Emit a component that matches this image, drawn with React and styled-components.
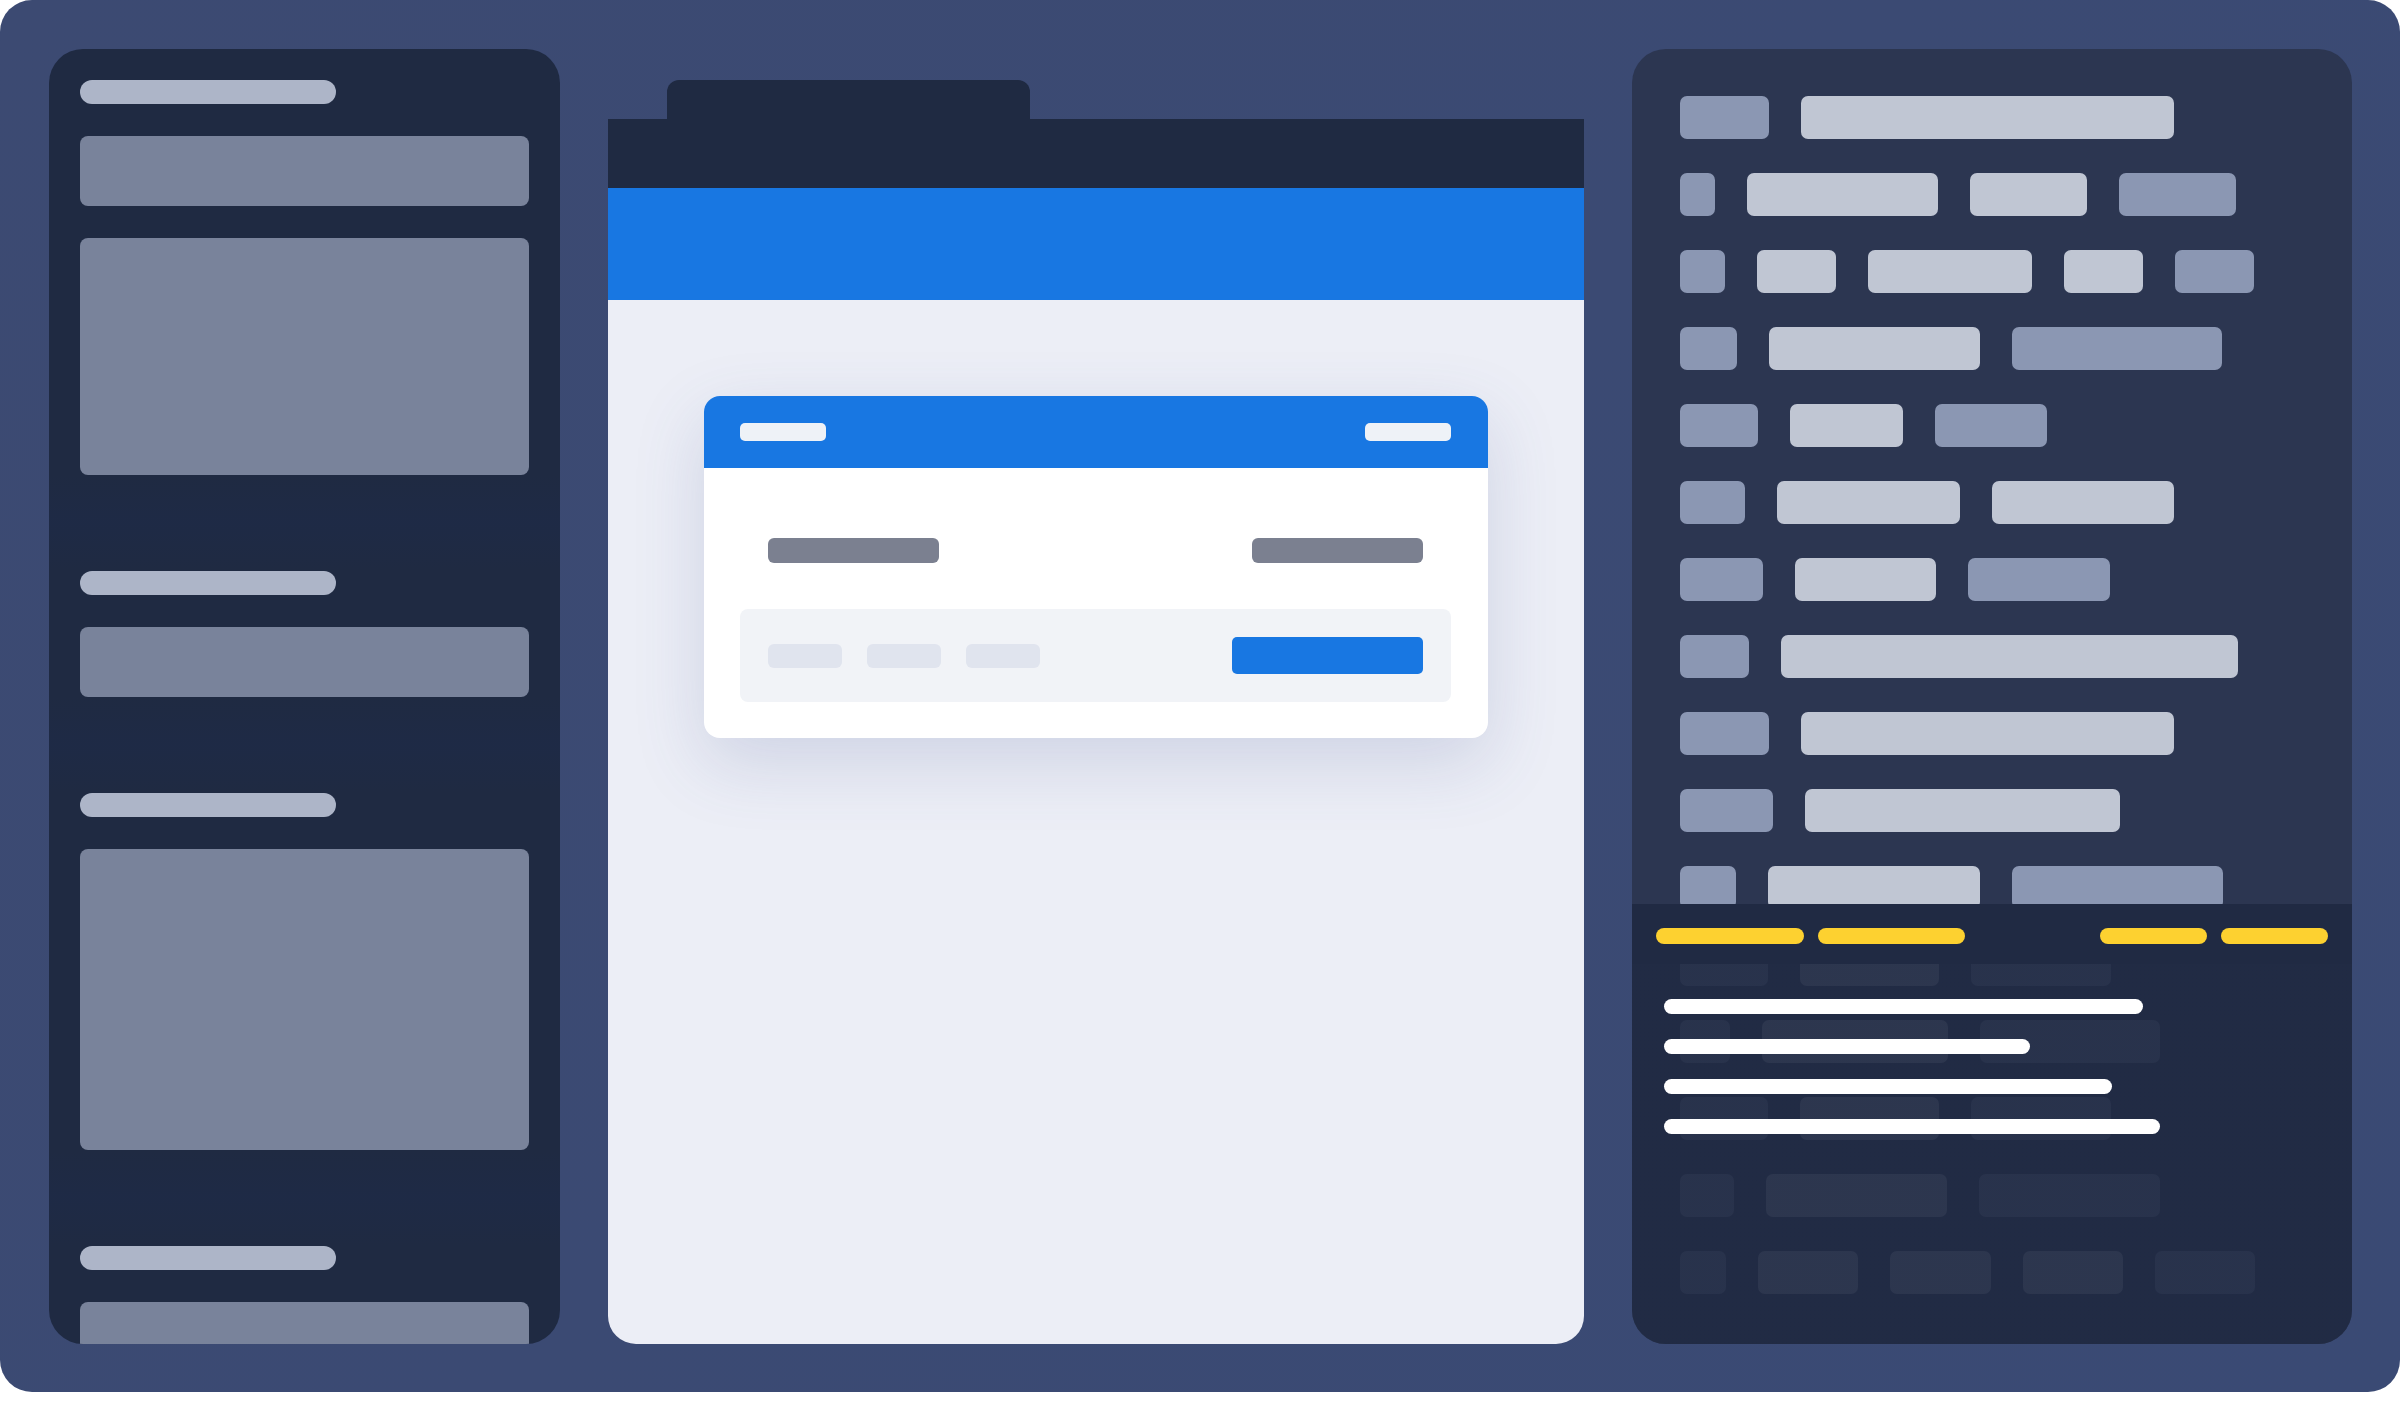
import React from "react";
import styled, { createGlobalStyle } from "styled-components";

const GlobalStyle = createGlobalStyle`
  html, body {
    margin: 0;
    padding: 0;
    background: #ffffff;
    font-family: "Inter", "Liberation Sans", sans-serif;
  }
`;

const codeRows = [
  [[89, "d"], [373, "l"]],
  [[35, "d"], [191, "l"], [117, "l"], [117, "d"]],
  [[45, "d"], [79, "l"], [164, "l"], [79, "l"], [79, "d"]],
  [[57, "d"], [211, "l"], [210, "d"]],
  [[78, "d"], [113, "l"], [112, "d"]],
  [[65, "d"], [183, "l"], [182, "l"]],
  [[83, "d"], [141, "l"], [142, "d"]],
  [[69, "d"], [457, "l"]],
  [[89, "d"], [373, "l"]],
  [[93, "d"], [315, "l"]],
  [[56, "d"], [212, "l"], [211, "d"]],
  [[88, "d"], [139, "l"], [140, "d"]],
  [[50, "d"], [186, "l"], [180, "d"]],
  [[88, "d"], [139, "l"], [140, "d"]],
  [[54, "d"], [181, "l"], [181, "d"]],
  [[46, "d"], [100, "l"], [101, "l"], [100, "l"], [100, "d"]],
];

const sidebarSections = [[70, 237], [70], [301], [120]];

const logLines = [479, 366, 448, 496];

const App = () => {
  return (
    <>
      <GlobalStyle />
      <Frame>
        <Sidebar>
          {sidebarSections.map((blocks, i) => (
            <React.Fragment key={i}>
              {i > 0 && <Band />}
              <Section>
                <Label />
                {blocks.map((h, j) => (
                  <Block key={j} $h={h} />
                ))}
              </Section>
            </React.Fragment>
          ))}
        </Sidebar>

        <Center>
          <Tab />
          <Window>
            <TitleBar />
            <Hero />
            <Canvas>
              <Dialog>
                <DialogHead>
                  <HeadPill />
                  <HeadPill />
                </DialogHead>
                <DialogBody>
                  <FieldRow>
                    <Field />
                    <Field />
                  </FieldRow>
                  <Footer>
                    <Chips>
                      <Chip />
                      <Chip />
                      <Chip />
                    </Chips>
                    <PrimaryButton />
                  </Footer>
                </DialogBody>
              </Dialog>
            </Canvas>
          </Window>
        </Center>

        <Editor>
          <Code>
            {codeRows.map((row, i) => (
              <CodeRow key={i}>
                {row.map(([w, tone], j) => (
                  <Token key={j} $w={w} $tone={tone} />
                ))}
              </CodeRow>
            ))}
          </Code>
          <Terminal>
            <TermHead>
              <PillGroup>
                <Pill $w={148} />
                <Pill $w={147} />
              </PillGroup>
              <PillGroup>
                <Pill $w={107} />
                <Pill $w={107} />
              </PillGroup>
            </TermHead>
            <Lines>
              {logLines.map((w, i) => (
                <Line key={i} $w={w} />
              ))}
            </Lines>
          </Terminal>
        </Editor>
      </Frame>
    </>
  );
};

export default App;

const Frame = styled.div`
  width: 2400px;
  height: 1392px;
  box-sizing: border-box;
  padding: 49px 48px 48px 49px;
  background: linear-gradient(135deg, #3c4a72 0%, #3a4a74 100%);
  border-radius: 32px;
  display: grid;
  grid-template-columns: 511px 976px 720px;
  column-gap: 48px;
`;

const Sidebar = styled.div`
  background: #1f2a42;
  border-radius: 34px;
  overflow: hidden;
  padding: 31px;
  display: flex;
  flex-direction: column;
`;

const Section = styled.div`
  display: flex;
  flex-direction: column;
  gap: 32px;
  flex-shrink: 0;
`;

const Band = styled.div`
  height: 96px;
  flex-shrink: 0;
  margin: 0 -31px;
  background: linear-gradient(
    180deg,
    rgba(28, 42, 78, 0) 0%,
    rgba(28, 42, 78, 0.3) 50%,
    rgba(28, 42, 78, 0) 100%
  );
`;

const Label = styled.div`
  width: 256px;
  height: 24px;
  border-radius: 12px;
  background: #adb5c8;
`;

const Block = styled.div`
  height: ${(p) => p.$h}px;
  flex-shrink: 0;
  border-radius: 8px;
  background: #79839b;
`;

const Center = styled.div`
  display: flex;
  flex-direction: column;
  padding-top: 31px;
`;

const Tab = styled.div`
  width: 363px;
  height: 39px;
  margin-left: 59px;
  background: #1f2a42;
  border-radius: 12px 12px 0 0;
`;

const Window = styled.div`
  flex: 1;
  display: flex;
  flex-direction: column;
  border-radius: 0 0 28px 28px;
  overflow: hidden;
`;

const TitleBar = styled.div`
  height: 69px;
  background: #1f2a42;
`;

const Hero = styled.div`
  height: 112px;
  background: #1877e2;
`;

const Canvas = styled.div`
  flex: 1;
  background: #eceef6;
  padding: 96px 96px 0;
`;

const Dialog = styled.div`
  height: 342px;
  background: #ffffff;
  border-radius: 16px;
  overflow: hidden;
  box-shadow: 0 24px 70px rgba(70, 90, 150, 0.18);
  display: flex;
  flex-direction: column;
`;

const DialogHead = styled.div`
  height: 72px;
  background: #1877e2;
  padding: 0 37px 0 36px;
  display: flex;
  align-items: center;
  justify-content: space-between;
`;

const HeadPill = styled.div`
  width: 86px;
  height: 18px;
  border-radius: 5px;
  background: #eef2f7;
`;

const DialogBody = styled.div`
  flex: 1;
  padding: 70px 37px 0 36px;
  display: flex;
  flex-direction: column;
  gap: 46px;
`;

const FieldRow = styled.div`
  display: flex;
  justify-content: space-between;
  padding: 0 28px;
`;

const Field = styled.div`
  width: 171px;
  height: 25px;
  border-radius: 6px;
  background: #7b8090;
`;

const Footer = styled.div`
  height: 93px;
  box-sizing: border-box;
  padding: 0 28px;
  border-radius: 8px;
  background: #f1f3f7;
  display: flex;
  align-items: center;
  justify-content: space-between;
`;

const Chips = styled.div`
  display: flex;
  gap: 25px;
`;

const Chip = styled.div`
  width: 74px;
  height: 24px;
  border-radius: 6px;
  background: #e0e4ee;
`;

const PrimaryButton = styled.div`
  width: 191px;
  height: 37px;
  border-radius: 5px;
  background: #1877e2;
`;

const Editor = styled.div`
  position: relative;
  background: #2c3651;
  border-radius: 34px;
  overflow: hidden;
`;

const Code = styled.div`
  padding: 47px 48px;
  display: flex;
  flex-direction: column;
  gap: 34px;
`;

const CodeRow = styled.div`
  display: flex;
  gap: 32px;
`;

const Token = styled.div`
  width: ${(p) => p.$w}px;
  height: 43px;
  flex-shrink: 0;
  border-radius: 7px;
  background: ${(p) => (p.$tone === "d" ? "#8b97b3" : "#c0c6d3")};
`;

const Terminal = styled.div`
  position: absolute;
  left: 0;
  right: 0;
  top: 855px;
  bottom: 0;
  padding: 24px 24px 0;
  background: linear-gradient(
    180deg,
    #202a43 0px,
    #202a43 60px,
    rgba(32, 42, 67, 0.92) 60px
  );
`;

const TermHead = styled.div`
  display: flex;
  justify-content: space-between;
`;

const PillGroup = styled.div`
  display: flex;
  gap: 14px;
`;

const Pill = styled.div`
  width: ${(p) => p.$w}px;
  height: 16px;
  border-radius: 8px;
  background: #fdd130;
`;

const Lines = styled.div`
  margin-top: 55px;
  padding-left: 8px;
  display: flex;
  flex-direction: column;
  gap: 25px;
`;

const Line = styled.div`
  width: ${(p) => p.$w}px;
  height: 15px;
  border-radius: 8px;
  background: #ffffff;
`;
